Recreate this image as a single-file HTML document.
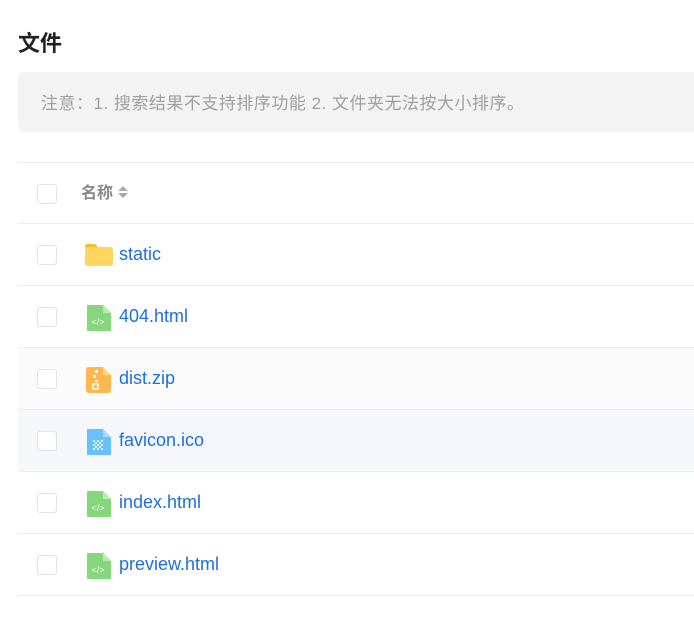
<!DOCTYPE html>
<html><head><meta charset="utf-8"><style>
*{margin:0;padding:0;box-sizing:border-box}
body{width:694px;height:628px;background:#fff;font-family:"Liberation Sans","Noto Sans CJK SC",sans-serif;overflow:hidden;position:relative}
.t{position:absolute;left:18px;top:26px;font-size:22px;font-weight:bold;color:#222}
.n{position:absolute;left:18px;top:72px;width:700px;height:60px;background:#f3f3f3;border-radius:6px;font-size:17px;letter-spacing:0.5px;color:#a0a0a0;line-height:64px;padding-left:23px;white-space:nowrap}
.row{position:absolute;left:18px;width:700px;height:62px;border-top:1px solid #ebeef5}
.cb{position:absolute;left:19px;top:21px;width:20px;height:20px;border:1px solid #e2e4ea;border-radius:3px;background:#fff}
.ic{position:absolute;left:67px;top:19px}
.nm{position:absolute;left:101px;top:0;line-height:61px;font-size:18px;color:#1e6fe0}
.h{font-size:16px;color:#888;font-weight:bold;position:absolute;left:63px;line-height:62px}
</style></head><body>
<div class="t">文件</div>
<div class="n">注意：1. 搜索结果不支持排序功能 2. 文件夹无法按大小排序。</div>
<div class="row" style="top:162px"><div class="cb"></div><div class="h">名称 <svg width="12" height="16" viewBox="0 0 12 16" style="vertical-align:-2px"><path d="M6 2L11 7H1Z M1 9H11L6 14Z" fill="#aaa"/></svg></div></div>
<div class="row" style="top:223px"><div class="cb"></div><svg class="ic" width="28" height="24" viewBox="0 0 28 24"><path d="M0 4Q0 1 3 1H10L13 4H25Q28 4 28 7V20Q28 23 25 23H3Q0 23 0 20Z" fill="#ffd75e"/><path d="M0 4Q0 1 3 1H10L13 4H0Z" fill="#f9b938"/></svg><div class="nm">static</div></div>
<div class="row" style="top:285px"><div class="cb"></div><svg class="ic" width="26" height="26" viewBox="0 0 26 26" style="left:68px"><path d="M1 0H17L25 8V26H1Z" fill="#85d67d"/><path d="M17 0L25 8H17Z" fill="#b8ecb1"/><text x="12" y="20" font-size="9" fill="#fff" text-anchor="middle" font-family="Liberation Sans">&lt;/&gt;</text></svg><div class="nm">404.html</div></div>
<div class="row" style="top:347px;background:#fbfbfb"><div class="cb"></div><svg class="ic" width="26" height="26" viewBox="0 0 26 26" style="left:68px"><path d="M3 0H17L25 8V23Q25 26 22 26H3Q0 26 0 23V3Q0 0 3 0Z" fill="#ffb84d"/><path d="M17 0L25 8H17Z" fill="#ffd88f"/><rect x="9" y="3" width="3" height="3" fill="#fff"/><rect x="7" y="8" width="3" height="3" fill="#fff"/><rect x="9" y="13" width="3" height="2" fill="#fff"/><rect x="7" y="17" width="5" height="5" fill="none" stroke="#fff" stroke-width="1.5"/></svg><div class="nm">dist.zip</div></div>
<div class="row" style="top:409px;background:#f5f7fa"><div class="cb"></div><svg class="ic" width="26" height="26" viewBox="0 0 26 26" style="left:68px"><path d="M1 0H17L25 8V26H1Z" fill="#67c1fa"/><path d="M17 0L25 8H17Z" fill="#a9dcfc"/><g fill="#fff" opacity=".8"><rect x="7" y="11" width="2" height="2"/><rect x="11" y="11" width="2" height="2"/><rect x="15" y="11" width="2" height="2"/><rect x="9" y="13" width="2" height="2"/><rect x="13" y="13" width="2" height="2"/><rect x="7" y="15" width="2" height="2"/><rect x="11" y="15" width="2" height="2"/><rect x="15" y="15" width="2" height="2"/><rect x="9" y="17" width="2" height="2"/><rect x="13" y="17" width="2" height="2"/><rect x="7" y="19" width="2" height="2"/><rect x="11" y="19" width="2" height="2"/><rect x="15" y="19" width="2" height="2"/></g></svg><div class="nm">favicon.ico</div></div>
<div class="row" style="top:471px"><div class="cb"></div><svg class="ic" width="26" height="26" viewBox="0 0 26 26" style="left:68px"><path d="M1 0H17L25 8V26H1Z" fill="#85d67d"/><path d="M17 0L25 8H17Z" fill="#b8ecb1"/><text x="12" y="20" font-size="9" fill="#fff" text-anchor="middle" font-family="Liberation Sans">&lt;/&gt;</text></svg><div class="nm">index.html</div></div>
<div class="row" style="top:533px"><div class="cb"></div><svg class="ic" width="26" height="26" viewBox="0 0 26 26" style="left:68px"><path d="M1 0H17L25 8V26H1Z" fill="#85d67d"/><path d="M17 0L25 8H17Z" fill="#b8ecb1"/><text x="12" y="20" font-size="9" fill="#fff" text-anchor="middle" font-family="Liberation Sans">&lt;/&gt;</text></svg><div class="nm">preview.html</div></div>
<div class="row" style="top:595px;height:1px"></div>
</body></html>
